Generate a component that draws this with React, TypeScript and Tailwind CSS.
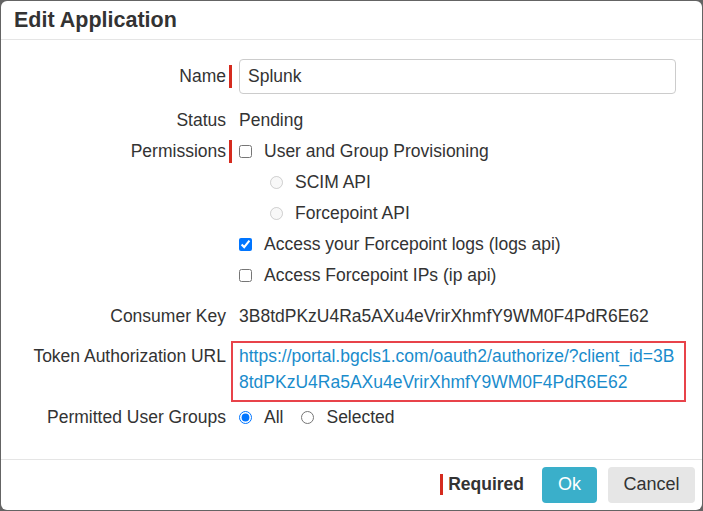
import type { ReactNode } from 'react';

const font = { fontFamily: '"Liberation Sans", Arial, sans-serif' };

const Row = ({
  label,
  required,
  className = 'h-[31px]',
  children,
}: {
  label?: string;
  required?: boolean;
  className?: string;
  children: ReactNode;
}) => (
  <div className={`flex items-center ${className}`}>
    <div className="w-[225px] shrink-0 text-right text-[#333] whitespace-nowrap">{label}</div>
    <div className="w-[13px] shrink-0 flex self-stretch items-center">
      {required && <span className="ml-[3px] w-[3px] h-[23px] bg-[#d52b1e]" />}
    </div>
    <div className="flex-1 flex items-center whitespace-nowrap">{children}</div>
  </div>
);

const Check = ({ label, checked = false }: { label: string; checked?: boolean }) => (
  <label className="flex items-center">
    <input type="checkbox" defaultChecked={checked} className="m-0 w-[13px] h-[13px] accent-[#0075ff]" />
    <span className="ml-[12px]">{label}</span>
  </label>
);

const Radio = ({ label, name, checked = false, disabled = false }: { label: string; name: string; checked?: boolean; disabled?: boolean }) => (
  <label className="flex items-center">
    <input
      type="radio"
      name={name}
      defaultChecked={checked}
      disabled={disabled}
      className="m-0 w-[13px] h-[13px] accent-[#0075ff]"
    />
    <span className="ml-[12px]">{label}</span>
  </label>
);

export default function App() {
  return (
    <div className="h-[511px] w-[703px] bg-[#646464] p-[1px]" style={font}>
      <div className="h-full w-full rounded-[6px] bg-white flex flex-col text-[17.5px] text-[#333]">
        {/* Header */}
        <div className="h-[39px] flex items-center px-[13px] border-b border-[#e5e5e5]">
          <h1 className="text-[21.5px] font-bold text-[#333]">Edit Application</h1>
        </div>

        {/* Body */}
        <div className="flex-1 pt-[19px]">
          <Row label="Name" required className="h-[35px]">
            <input
              defaultValue="Splunk"
              className="w-[437px] h-[35px] rounded-[4px] border border-[#ccc] px-[8px] text-[17.5px] text-[#333] outline-none"
              style={font}
            />
          </Row>

          <div className="mt-[11px]">
            <Row label="Status">Pending</Row>
            <Row label="Permissions" required>
              <Check label="User and Group Provisioning" />
            </Row>
            <Row>
              <div className="pl-[31px]">
                <Radio label="SCIM API" name="prov" disabled />
              </div>
            </Row>
            <Row>
              <div className="pl-[31px]">
                <Radio label="Forcepoint API" name="prov" disabled />
              </div>
            </Row>
            <Row>
              <Check label="Access your Forcepoint logs (logs api)" checked />
            </Row>
            <Row>
              <Check label="Access Forcepoint IPs (ip api)" />
            </Row>
          </div>

          <div className="mt-[10px]">
            <Row label="Consumer Key">3B8tdPKzU4Ra5AXu4eVrirXhmfY9WM0F4PdR6E62</Row>
          </div>

          <div className="mt-[9px] flex items-start">
            <div className="w-[225px] shrink-0 text-right leading-[26px] pt-[2px] whitespace-nowrap">Token Authorization URL</div>
            <div className="ml-[5px] w-[455px] border-[2px] border-[#e8434a] pl-[6px] pb-[5px] text-[#1a8ccc] leading-[26px] whitespace-nowrap">
              <div>https://portal.bgcls1.com/oauth2/authorize/?client_id=3B</div>
              <div>8tdPKzU4Ra5AXu4eVrirXhmfY9WM0F4PdR6E62</div>
            </div>
          </div>

          <Row label="Permitted User Groups" className="h-[31px]">
            <div className="flex items-center gap-[18px]">
              <Radio label="All" name="groups" checked />
              <Radio label="Selected" name="groups" />
            </div>
          </Row>
        </div>

        {/* Footer */}
        <div className="h-[51px] border-t border-[#e5e5e5] flex items-center justify-end pr-[7px] pb-[1px]">
          <div className="flex items-center mr-[18px]">
            <span className="w-[3px] h-[21px] bg-[#d52b1e] mr-[5px]" />
            <span className="font-bold text-[17.5px] text-[#333]">Required</span>
          </div>
          <button className="h-[36px] w-[55px] rounded-[4px] bg-[#3aafca] text-white text-[18px] mr-[11px]" style={font}>
            Ok
          </button>
          <button className="h-[36px] w-[87px] rounded-[4px] bg-[#e6e6e6] text-[#333] text-[18px]" style={font}>
            Cancel
          </button>
        </div>
      </div>
    </div>
  );
}
